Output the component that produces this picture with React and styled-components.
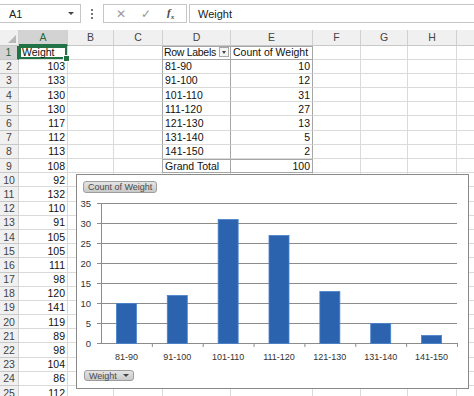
import React from "react";
import styled, { createGlobalStyle } from "styled-components";

const GlobalStyle = createGlobalStyle`
  html, body {
    margin: 0;
    padding: 0;
    background: #fff;
    overflow: hidden;
  }
  body {
    font-family: "Liberation Sans", Arial, sans-serif;
    width: 474px;
    height: 396px;
  }
`;

const Page = styled.div`
  width: 474px;
  height: 396px;
  overflow: hidden;
  position: relative;
  background: #fff;
`;

const FormulaBar = styled.div`
  height: 30px;
  box-sizing: border-box;
  padding-top: 4px;
  display: flex;
  align-items: flex-start;
  background: #fff;
`;

const NameBox = styled.div`
  width: 81px;
  height: 19px;
  box-sizing: border-box;
  border: 1px solid #c6c6c6;
  border-left: none;
  display: flex;
  align-items: center;
  justify-content: space-between;
  padding: 0 6px 0 9px;
  font-size: 11px;
  color: #222;
`;

const Caret = styled.span`
  width: 0;
  height: 0;
  border-left: 3px solid transparent;
  border-right: 3px solid transparent;
  border-top: 3px solid #444;
`;

const Dots = styled.div`
  width: 22px;
  height: 19px;
  display: flex;
  flex-direction: column;
  align-items: center;
  justify-content: center;
  gap: 2px;
  & > span {
    width: 2px;
    height: 2px;
    background: #777;
  }
`;

const IconBox = styled.div`
  width: 84px;
  height: 19px;
  box-sizing: border-box;
  border: 1px solid #c6c6c6;
  display: flex;
  align-items: center;
  justify-content: space-around;
  padding: 0 4px;
  color: #9a9a9a;
  font-size: 12px;
`;

const Fx = styled.span`
  font-family: "Liberation Serif", serif;
  font-style: italic;
  font-weight: bold;
  color: #444;
  font-size: 11px;
  & > sub {
    font-size: 7px;
  }
`;

const FormulaInput = styled.div`
  flex: 1;
  margin-left: 2px;
  height: 19px;
  box-sizing: border-box;
  border: 1px solid #c6c6c6;
  border-right: none;
  display: flex;
  align-items: center;
  padding-left: 8px;
  font-size: 11px;
  color: #222;
`;

const COLS = "19px 49px 46px 49px 68px 82px 48px 47px 49px 49px";

const Row = styled.div`
  display: grid;
  grid-template-columns: ${COLS};
  height: ${(p) => (p.$head ? "15.5px" : "14.2px")};
`;

const HeadCell = styled.div`
  box-sizing: border-box;
  background: ${(p) => (p.$active ? "#d3d3d3" : "#f0f0f0")};
  border-right: 1px solid #d0d0d0;
  border-bottom: 1px solid #c8c8c8;
  color: ${(p) => (p.$active ? "#1e6b41" : "#444")};
  font-size: 10.5px;
  display: flex;
  align-items: center;
  justify-content: center;
  position: relative;
  ${(p) => p.$active && p.$col && "border-bottom: 2px solid #217346;"}
  ${(p) => p.$active && p.$row && "border-right: 2px solid #217346;"}
`;

const Corner = styled(HeadCell)`
  &::after {
    content: "";
    position: absolute;
    right: 2px;
    bottom: 2px;
    border-left: 8px solid transparent;
    border-bottom: 8px solid #b8b8b8;
  }
`;

const Cell = styled.div`
  box-sizing: border-box;
  border-right: 1px solid #dadada;
  border-bottom: 1px solid #dadada;
  font-size: 10.5px;
  color: #111;
  display: flex;
  align-items: center;
  justify-content: ${(p) => (p.$right ? "flex-end" : "space-between")};
  padding: 0 2px 0 2px;
  white-space: nowrap;
  overflow: visible;
  position: relative;
  ${(p) => p.$tight && "letter-spacing: -0.3px; padding-left: 1px;"}
  ${(p) => p.$pl && "border-left: 1px solid #a6a6a6; margin-left: -1px;"}
  ${(p) => p.$pr && "border-right-color: #a6a6a6;"}
  ${(p) => p.$pb && "border-bottom-color: #a6a6a6;"}
  ${(p) => p.$pt && "box-shadow: inset 0 1px 0 #a6a6a6;"}
  ${(p) =>
    p.$selected &&
    `
    box-shadow: inset 0 0 0 2px #217346;
    padding-left: 3px;
    &::after {
      content: "";
      position: absolute;
      right: -3px;
      bottom: -3px;
      width: 5px;
      height: 5px;
      background: #217346;
      border: 1px solid #fff;
      z-index: 2;
    }
  `}
`;

const FilterButton = styled.span`
  flex: none;
  width: 10px;
  height: 10px;
  margin-right: -1px;
  box-sizing: border-box;
  border: 1px solid #a8a8a8;
  background: #f4f4f4;
  display: flex;
  align-items: center;
  justify-content: center;
  &::before {
    content: "";
    border-left: 2.5px solid transparent;
    border-right: 2.5px solid transparent;
    border-top: 3px solid #444;
  }
`;

const Chart = styled.div`
  position: absolute;
  left: 76px;
  top: 174px;
  width: 393px;
  height: 215px;
  box-sizing: border-box;
  border: 1px solid #8a8a8a;
  background: #fff;
  display: flex;
  flex-direction: column;
  align-items: flex-start;
  z-index: 5;
`;

const FieldButton = styled.div`
  margin: ${(p) => p.$margin};
  height: ${(p) => p.$h}px;
  box-sizing: border-box;
  padding: 0 4px;
  border: 1px solid #9d9d9d;
  border-radius: 3px;
  background: linear-gradient(#e4e4e4, #c9c9c9);
  font-size: 9px;
  color: #4a4a4a;
  display: flex;
  align-items: center;
  gap: 6px;
  white-space: nowrap;
`;

const ChartSvg = styled.svg`
  display: block;
  width: 391px;
  height: 177px;
  font-family: "Liberation Sans", Arial, sans-serif;
`;

const weights = [103, 133, 130, 130, 117, 112, 113, 108, 92, 132, 110, 91, 105, 105, 111, 98, 120, 141, 119, 89, 98, 104, 86, 112];
const bins = [
  ["81-90", 10],
  ["91-100", 12],
  ["101-110", 31],
  ["111-120", 27],
  ["121-130", 13],
  ["131-140", 5],
  ["141-150", 2],
];
// column I is only partly on screen, its letter falls outside the window
const letters = ["A", "B", "C", "D", "E", "F", "G", "H", ""];

function BarChart() {
  const left = 24;
  const right = 380;
  const top = 10;
  const bottom = 150;
  const unit = (bottom - top) / 35;
  const step = (right - left) / bins.length;
  const grid = [0, 5, 10, 15, 20, 25, 30, 35];
  return (
    <ChartSvg viewBox="0 0 391 177">
      {grid.map((v) => {
        const y = bottom - v * unit + 0.5;
        return (
          <g key={v}>
            <line x1={left - 4} x2={right} y1={y} y2={y} stroke="#8c8c8c" strokeWidth="1" />
            <text x={14} y={y + 3.5} fontSize="9.5" fill="#333" textAnchor="end">{v}</text>
          </g>
        );
      })}
      <line x1={left + 0.5} x2={left + 0.5} y1={top} y2={bottom + 1} stroke="#8c8c8c" />
      {bins.map(([label, n], i) => {
        const cx = left + step * i + step / 2;
        const h = n * unit;
        return (
          <g key={label}>
            <rect x={cx - 10} y={bottom - h + 0.5} width="20" height={h} fill="#2c63ae" stroke="#4a82cc" strokeWidth="0.8" />
            <text x={cx} y={167} fontSize="9" fill="#333" textAnchor="middle">{label}</text>
          </g>
        );
      })}
      {bins.map((b, i) => (
        <line key={i} x1={left + step * (i + 1) + 0.5} x2={left + step * (i + 1) + 0.5} y1={bottom} y2={bottom + 4} stroke="#8c8c8c" />
      ))}
    </ChartSvg>
  );
}

function rowCells(r) {
  const cells = Array(10).fill(null).map(() => ({}));
  if (r === 1) {
    cells[1] = { text: "Weight", selected: true };
    cells[4] = { text: "Row Labels", filter: true, tight: true, pl: 1, pt: 1, pb: 1 };
    cells[5] = { text: "Count of Weight", pt: 1, pb: 1, pl: 1, pr: 1 };
  } else {
    cells[1] = { text: weights[r - 2], right: true };
  }
  if (r >= 2 && r <= 8) {
    cells[4] = { text: bins[r - 2][0], pl: 1 };
    cells[5] = { text: bins[r - 2][1], right: true, pl: 1, pr: 1 };
  }
  if (r === 9) {
    cells[4] = { text: "Grand Total", pl: 1, pt: 1, pb: 1 };
    cells[5] = { text: 100, right: true, pl: 1, pr: 1, pt: 1, pb: 1 };
  }
  return cells;
}

export default function App() {
  const rows = Array.from({ length: 25 }, (_, i) => i + 1);
  return (
    <Page>
      <GlobalStyle />
      <FormulaBar>
        <NameBox>
          A1
          <Caret />
        </NameBox>
        <Dots>
          <span />
          <span />
          <span />
        </Dots>
        <IconBox>
          <span>✕</span>
          <span>✓</span>
          <Fx>f<sub>x</sub></Fx>
        </IconBox>
        <FormulaInput>Weight</FormulaInput>
      </FormulaBar>

      <Row $head>
        <Corner />
        {letters.map((l, i) => (
          <HeadCell key={i} $active={l === "A"} $col>{l}</HeadCell>
        ))}
      </Row>
      {rows.map((r) => (
        <Row key={r}>
          <HeadCell $active={r === 1} $row>{r}</HeadCell>
          {rowCells(r).slice(1).map((c, i) => (
            <Cell
              key={i}
              $right={c.right}
              $selected={c.selected}
              $tight={c.tight}
              $pl={c.pl}
              $pr={c.pr}
              $pt={c.pt}
              $pb={c.pb}
            >
              {c.text}
              {c.filter && <FilterButton />}
            </Cell>
          ))}
        </Row>
      ))}

      <Chart>
        <FieldButton $margin="6px 0 0 6px" $h={12}>Count of Weight</FieldButton>
        <BarChart />
        <FieldButton $margin="0 0 0 7px" $h={11}>
          Weight
          <Caret />
        </FieldButton>
      </Chart>
    </Page>
  );
}
